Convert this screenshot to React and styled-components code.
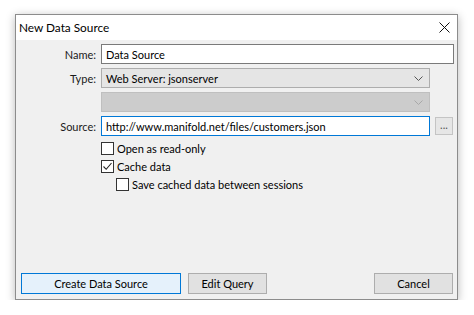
import React from 'react';
import styled, { createGlobalStyle } from 'styled-components';

const GlobalStyle = createGlobalStyle`
  body {
    margin: 0;
    background: #ffffff;
    font-family: Lato, "Noto Sans", sans-serif;
    font-size: 11px;
    color: #000;
  }
`;

const Page = styled.div`
  padding: 14px 0 0 15px;
`;

const Dialog = styled.div`
  width: 441px;
  height: 284px;
  border: 1px solid #8c8c8c;
  background: #f0f0f0;
  display: flex;
  flex-direction: column;
  box-shadow: 0 2px 9px rgba(0, 0, 0, 0.28);
`;

const TitleBar = styled.div`
  height: 25px;
  background: #ffffff;
  display: flex;
  align-items: center;
  justify-content: space-between;
  padding: 0 7px 0 3px;
`;

const Title = styled.span`
  font-size: 11.8px;
`;

const Body = styled.div`
  padding: 4px 0 0 0;
  display: grid;
  grid-template-columns: 80px 1fr;
  column-gap: 5px;
  row-gap: 4px;
  align-items: center;
`;

const Label = styled.label`
  text-align: right;
  color: #1a1a1a;
`;

const Field = styled.div`
  height: 20px;
  box-sizing: border-box;
  width: ${p => p.$w}px;
  border: 1px solid ${p => p.$border || '#7a7a7a'};
  background: ${p => p.$bg || '#fff'};
  display: flex;
  align-items: center;
  justify-content: space-between;
  padding: 0 6px 0 4px;
  white-space: nowrap;
  overflow: hidden;
`;

const FieldRow = styled.div`
  display: flex;
  align-items: center;
  gap: 5px;
`;

const Browse = styled.div`
  width: 18px;
  height: 18px;
  box-sizing: border-box;
  border: 1px solid #c4c4c4;
  background: #e6e6e6;
  display: flex;
  align-items: center;
  justify-content: center;
  font-size: 11px;
  color: #555;
  padding-bottom: 3px;
`;

const Checks = styled.div`
  grid-column: 2;
  margin-top: -1px;
  display: flex;
  flex-direction: column;
`;

const CheckRow = styled.div`
  height: 18px;
  display: flex;
  align-items: center;
  gap: 3px;
  padding-left: ${p => p.$indent || 0}px;
`;

const Box = styled.span`
  width: 13px;
  height: 13px;
  box-sizing: border-box;
  border: 1px solid #333;
  background: #fff;
  display: flex;
  align-items: center;
  justify-content: center;
`;

const Footer = styled.div`
  margin-top: auto;
  padding: 0 4px 5px 5px;
  display: flex;
  gap: 7px;
`;

const Button = styled.button`
  width: ${p => p.$w}px;
  height: 21px;
  box-sizing: border-box;
  font-family: inherit;
  font-size: 11px;
  color: #000;
  padding: 0;
  border: 1px solid ${p => (p.$default ? '#0078d7' : '#adadad')};
  background: ${p => (p.$default ? '#e5f1fb' : '#e1e1e1')};
  margin-left: ${p => (p.$push ? 'auto' : '0')};
`;

const Chevron = ({ color = '#555' }) => (
  <svg width="9" height="5" viewBox="0 0 9 5">
    <path d="M0.5 0.5 L4.5 4.5 L8.5 0.5" fill="none" stroke={color} strokeWidth="1" />
  </svg>
);

const Close = () => (
  <svg width="11" height="11" viewBox="0 0 11 11">
    <path d="M0.5 0.5 L10.5 10.5 M10.5 0.5 L0.5 10.5" stroke="#111" strokeWidth="1" />
  </svg>
);

const Tick = () => (
  <svg width="11" height="11" viewBox="0 0 11 11">
    <path d="M1.5 5.5 L4.2 8.3 L9.5 2" fill="none" stroke="#222" strokeWidth="1.1" />
  </svg>
);

function Check({ label, checked, indent }) {
  return (
    <CheckRow $indent={indent}>
      <Box>{checked && <Tick />}</Box>
      <span>{label}</span>
    </CheckRow>
  );
}

export default function App() {
  return (
    <Page>
      <GlobalStyle />
      <Dialog>
        <TitleBar>
          <Title>New Data Source</Title>
          <Close />
        </TitleBar>
        <Body>
          <Label>Name:</Label>
          <Field $w={353}>Data Source</Field>

          <Label>Type:</Label>
          <Field $w={329} $bg="#e5e5e5" $border="#adadad">
            <span>Web Server: jsonserver</span>
            <Chevron />
          </Field>

          <span />
          <Field $w={329} $bg="#cccccc" $border="#bfbfbf">
            <span />
            <Chevron color="#a8a8a8" />
          </Field>

          <Label>Source:</Label>
          <FieldRow>
            <Field $w={329} $border="#0078d7">http://www.manifold.net/files/customers.json</Field>
            <Browse>...</Browse>
          </FieldRow>

          <Checks>
            <Check label="Open as read-only" />
            <Check label="Cache data" checked />
            <Check label="Save cached data between sessions" indent={15} />
          </Checks>
        </Body>
        <Footer>
          <Button $w={160} $default>Create Data Source</Button>
          <Button $w={79}>Edit Query</Button>
          <Button $w={79} $push>Cancel</Button>
        </Footer>
      </Dialog>
    </Page>
  );
}
